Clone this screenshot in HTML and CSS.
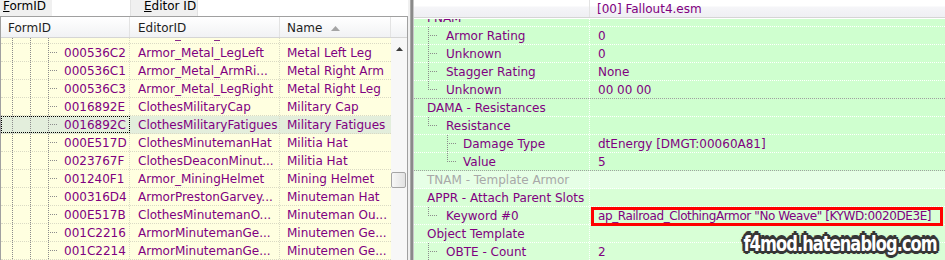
FILE: index.html
```html
<!DOCTYPE html>
<html>
<head>
<meta charset="utf-8">
<link rel="stylesheet" href="styles.css">
</head>
<body>
<div class="app">
  <div class="left">
    <div class="tabs">
      <div class="tab t1"><u>F</u>ormID</div>
      <div class="edit e1"></div>
      <div class="tab t2"><u>E</u>ditor ID</div>
      <div class="edit e2"></div>
    </div>
    <div class="list">
      <div class="lhead">
        <div class="h h1">FormID</div>
        <div class="h h2">EditorID</div>
        <div class="h h3">Name<svg class="sort" width="9" height="5" viewBox="0 0 9 5"><polygon points="0,5 4.5,0 9,5" fill="#a4a4a4"/></svg></div>
        <div class="h h4"></div>
      </div>
      <div class="lbody">
        <div class="rows">
          <div class="row strip"><div class="c1"></div><div class="c2"><span class="us u1"></span><span class="us u2"></span></div><div class="c3"></div></div>
          <div class="row"><div class="c1">000536C2</div><div class="c2">Armor_Metal_LegLeft</div><div class="c3">Metal Left Leg</div></div>
          <div class="row"><div class="c1">000536C1</div><div class="c2">Armor_Metal_ArmRi...</div><div class="c3">Metal Right Arm</div></div>
          <div class="row"><div class="c1">000536C3</div><div class="c2">Armor_Metal_LegRight</div><div class="c3">Metal Right Leg</div></div>
          <div class="row"><div class="c1">0016892E</div><div class="c2">ClothesMilitaryCap</div><div class="c3">Military Cap</div></div>
          <div class="row sel"><div class="c1">0016892C</div><div class="c2">ClothesMilitaryFatigues</div><div class="c3">Military Fatigues</div></div>
          <div class="row"><div class="c1">000E517D</div><div class="c2">ClothesMinutemanHat</div><div class="c3">Militia Hat</div></div>
          <div class="row"><div class="c1">0023767F</div><div class="c2">ClothesDeaconMinut...</div><div class="c3">Militia Hat</div></div>
          <div class="row"><div class="c1">001240F1</div><div class="c2">Armor_MiningHelmet</div><div class="c3">Mining Helmet</div></div>
          <div class="row"><div class="c1">000316D4</div><div class="c2">ArmorPrestonGarvey...</div><div class="c3">Minuteman Hat</div></div>
          <div class="row"><div class="c1">000E517B</div><div class="c2">ClothesMinutemanO...</div><div class="c3">Minuteman Ou...</div></div>
          <div class="row"><div class="c1">001C2216</div><div class="c2">ArmorMinutemanGe...</div><div class="c3">Minutemen Ge...</div></div>
          <div class="row"><div class="c1">001C2214</div><div class="c2">ArmorMinutemanGe...</div><div class="c3">Minutemen Ge...</div></div>
        </div>
        <div class="vscroll">
          <div class="sbtn"><svg width="7" height="4" viewBox="0 0 7 4"><polygon points="0,4 3.5,0 7,4" fill="#3c3c3c"/></svg></div>
          <div class="thumb"></div>
        </div>
      </div>
    </div>
  </div>
  <div class="split"></div>
  <div class="right">
    <div class="rhead"><div class="rh1"></div><div class="rh2">[00] Fallout4.esm</div></div>
    <div class="rbody">
      <div class="rinner">
        <div class="prow"><div class="pn l0">FNAM</div><div class="pv"></div></div>
        <div class="prow"><div class="pn l1 mid1">Armor Rating</div><div class="pv">0</div></div>
        <div class="prow"><div class="pn l1 mid1">Unknown</div><div class="pv">0</div></div>
        <div class="prow"><div class="pn l1 mid1">Stagger Rating</div><div class="pv">None</div></div>
        <div class="prow gb"><div class="pn l1 end1">Unknown</div><div class="pv">00 00 00</div></div>
        <div class="prow"><div class="pn l0">DAMA - Resistances</div><div class="pv"></div></div>
        <div class="prow"><div class="pn l1 end1">Resistance</div><div class="pv"></div></div>
        <div class="prow"><div class="pn l2 mid2">Damage Type</div><div class="pv">dtEnergy [DMGT:00060A81]</div></div>
        <div class="prow gb"><div class="pn l2 end2">Value</div><div class="pv">5</div></div>
        <div class="prow dis"><div class="pn l0">TNAM - Template Armor</div><div class="pv"></div></div>
        <div class="prow lite"><div class="pn l0">APPR - Attach Parent Slots</div><div class="pv"></div></div>
        <div class="prow lite"><div class="pn l1 end1">Keyword #0</div><div class="pv hl">ap_Railroad_ClothingArmor "No Weave" [KYWD:0020DE3E]</div></div>
        <div class="prow lite"><div class="pn l0">Object Template</div><div class="pv"></div></div>
        <div class="prow lite"><div class="pn l1 mid1">OBTE - Count</div><div class="pv">2</div></div>
      </div>
    </div>
  </div>
</div>
<div class="wm">f4mod.hatenablog.com</div>
</body>
</html>
```
FILE: styles.css
```css
* { box-sizing: border-box; }
:root {
  --vd: repeating-linear-gradient(to bottom, #8c8c8c 0 1px, transparent 1px 2px);
  --hd: repeating-linear-gradient(to right, #8c8c8c 0 1px, transparent 1px 2px);
}
body {
  margin: 0;
  width: 945px;
  height: 260px;
  overflow: hidden;
  position: relative;
  background: #fff;
  font: 12px "DejaVu Sans", Verdana, sans-serif;
}
.app { display: flex; height: 260px; }

/* left pane */
.left { width: 408px; flex: none; display: flex; flex-direction: column; }
.tabs { display: flex; height: 16px; line-height: 12px; color: #000; }
.tab { background: #f0f0f0; }
.t1 { width: 52px; padding-left: 3px; }
.e1 { width: 78px; }
.t2 { width: 68px; padding-left: 13px; border-left: 1px solid #e2e2e2; border-right: 1px solid #e2e2e2; }
.edit { background: #fff; }
.e2 { flex: 1; }
.list {
  flex: 1;
  min-height: 0;
  border: 1px solid #a0a0a0;
  border-bottom: none;
  display: flex;
  flex-direction: column;
}
.lhead {
  display: flex;
  height: 21px;
  flex: none;
  border-bottom: 1px solid #d5d5d5;
  background: linear-gradient(#ffffff, #f1f2f4);
  color: #1e1e1e;
}
.h { padding-top: 3px; line-height: 17px; border-right: 1px solid #e3e3e3; white-space: nowrap; }
.h1 { width: 129px; padding-left: 7px; }
.h2 { width: 150px; padding-left: 8px; }
.h3 { width: 111px; padding-left: 7px; }
.h4 { flex: 1; border-right: none; }
.sort { margin-left: 9px; vertical-align: 1px; }

.lbody { flex: 1; min-height: 0; display: flex; }
.rows { width: 390px; overflow: hidden; }
.row {
  display: grid;
  grid-template-columns: 129px 150px 111px;
  height: 18px;
  border-bottom: 1px dotted #dadac4;
  background: #ffffe0;
  color: #800080;
}
.row > div { padding-top: 1px; line-height: 16px; white-space: nowrap; overflow: hidden; }
.c1 {
  padding-left: 63px;
  border-right: 1px dotted #dadac4;
  background-image: var(--vd), var(--vd), var(--vd), var(--hd);
  background-position: 11px 0, 29px 0, 47px 0, 49px 8px;
  background-size: 1px 100%, 1px 100%, 1px 100%, 8px 1px;
  background-repeat: no-repeat;
}
.c2 { padding-left: 8px; border-right: 1px dotted #dadac4; }
.c3 { padding-left: 7px; }
.row.sel { background-color: #e3eedc; }
.row.sel .c1 { outline: 1px dotted #000; outline-offset: -1px; }

.row.strip { height: 6px; }
.row.strip .c1 { background-size: 1px 100%, 1px 100%, 1px 100%, 0 0; }
.row.strip .c2 { padding-top: 2px; line-height: 0; }
.us { display: inline-block; width: 6px; height: 1px; background: #8a2a8a; vertical-align: top; }
.u1 { margin-left: 37px; }
.u2 { margin-left: 33px; }

.vscroll { width: 16px; flex: none; background: #f7f7f7; }
.sbtn { height: 20px; padding: 9px 0 0 5px; }
.sbtn svg { display: block; }
.thumb {
  margin-top: 114px;
  width: 15px;
  height: 16px;
  border: 1px solid #a5a5a5;
  border-radius: 2px;
  background: linear-gradient(to right, #f7f7f7, #e2e2e2);
}

/* splitter */
.split {
  width: 6px;
  flex: none;
  background: linear-gradient(to right, #f0f0f0 0 2px, #a8a8a8 2px 3px, #8a8a8a 3px 5px, #c8c8c8 5px 6px);
}

/* right pane */
.right { flex: 1; min-width: 0; display: flex; flex-direction: column; }
.rhead {
  display: flex;
  height: 18px;
  flex: none;
  border-bottom: 1px solid #d5d5d5;
  background: linear-gradient(#ffffff 0 6px, #f5f5f8 7px, #efeff3);
}
.rh1 { width: 176px; border-right: 1px solid #e3e3e3; }
.rh2 { flex: 1; padding: 1px 0 0 7px; line-height: 16px; color: #800080; }
.rbody { flex: 1; min-height: 0; border-top: 1px solid #fff; overflow: hidden; }
.rinner { margin-top: -10px; }
.prow {
  display: grid;
  grid-template-columns: 176px 1fr;
  height: 18px;
  border-bottom: 1px dotted #fff;
  background: #cfffcf;
  color: #800080;
}
.prow > div { padding-top: 1px; line-height: 16px; white-space: nowrap; }
.pn { border-right: 1px dotted #fff; }
.pv { padding-left: 8px; }
.l0 { padding-left: 13px; }
.l1 { padding-left: 32px; }
.l2 { padding-left: 49px; }
.prow.gb { border-bottom-color: #a0a0a0; }
.prow.dis { background: #e6ffe6; color: #a8a8a8; }
.prow.lite { background: #d8ffd6; }

.mid1, .end1, .mid2, .end2 {
  background-image: var(--vd), var(--hd);
  background-repeat: no-repeat;
}
.mid1 { background-position: 14px 0, 14px 8px; background-size: 1px 100%, 10px 1px; }
.end1 { background-position: 14px 0, 14px 8px; background-size: 1px 9px, 10px 1px; }
.mid2 { background-position: 33px 0, 33px 8px; background-size: 1px 100%, 10px 1px; }
.end2 { background-position: 33px 0, 33px 8px; background-size: 1px 9px, 10px 1px; }

.pv.hl {
  height: 19px;
  margin: 0 2px 0 1px;
  padding-left: 7px;
  letter-spacing: -0.4px;
  box-shadow: inset 0 0 0 3px #ff0000;
  position: relative;
  z-index: 1;
}

/* watermark */
.wm {
  position: absolute;
  right: 8px;
  top: 231px;
  font: bold 20px/22px "DejaVu Sans Condensed", "DejaVu Sans", sans-serif;
  letter-spacing: -1px;
  color: #fff;
  transform: scale(0.9, 1.1);
  transform-origin: 100% 0;
  white-space: nowrap;
  text-shadow:
    -2px -2px 0 #363636, 2px -2px 0 #363636, -2px 2px 0 #363636, 2px 2px 0 #363636,
    0 -3px 0 #363636, 0 3px 0 #363636, -3px 0 0 #363636, 3px 0 0 #363636,
    0 0 4px #444;
}
```
